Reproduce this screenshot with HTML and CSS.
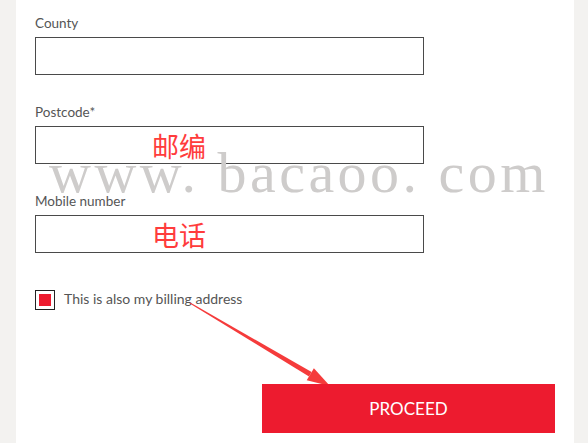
FILE: index.html
```html
<!DOCTYPE html>
<html lang="en">
<head>
<meta charset="utf-8">
<title>Address</title>
<link rel="stylesheet" href="styles.css">
</head>
<body>
<div class="page">
  <form class="form">
    <div class="field">
      <label class="label">County</label>
      <div class="box"></div>
    </div>
    <div class="field">
      <label class="label">Postcode*</label>
      <div class="box"><span class="note">邮编</span></div>
    </div>
    <div class="field">
      <label class="label">Mobile number</label>
      <div class="box"><span class="note">电话</span></div>
    </div>
    <div class="check-row">
      <span class="check"><span class="check-fill"></span></span>
      <span class="check-label">This is also my billing address</span>
    </div>
    <button type="button" class="proceed">PROCEED</button>
  </form>
  <svg class="arrow" width="588" height="443" viewBox="0 0 588 443">
    <polygon fill="#f53b3b" points="189.8,303.4 190.2,302.6 311.6,372.1 309.0,376.4"/>
    <polygon fill="#f53b3b" points="306.7,380.3 313.9,368.3 330,386"/>
  </svg>
  <div class="watermark">www. bacaoo. com</div>
</div>
</body>
</html>
```

FILE: styles.css
```css
html, body {
  margin: 0;
  padding: 0;
}
body {
  background: #f3f2f0;
  font-family: Lato, "Noto Sans", sans-serif;
  width: 588px;
  height: 443px;
  overflow: hidden;
}
.page {
  position: relative;
  margin-left: 16px;
  width: 558px;
  height: 443px;
  background: #ffffff;
  box-sizing: border-box;
  padding: 13px 19px 0;
}
.form {
  display: flex;
  flex-direction: column;
}
.field {
  display: flex;
  flex-direction: column;
  gap: 4px;
  margin-bottom: 27px;
}
.label {
  font-size: 13.5px;
  line-height: 20px;
  color: #555555;
}
.box {
  width: 389px;
  height: 38px;
  box-sizing: border-box;
  border: 1px solid #4a4a4a;
  display: flex;
  align-items: center;
  padding-left: 116px;
}
.note {
  font-family: "Noto Sans CJK SC", sans-serif;
  font-size: 27px;
  font-weight: 400;
  line-height: 1;
  color: #ff3c3c;
}
.check-row {
  display: flex;
  align-items: center;
  gap: 9px;
  margin-top: 10px;
}
.check {
  width: 20px;
  height: 20px;
  box-sizing: border-box;
  border: 1.5px solid #222222;
  display: flex;
  align-items: center;
  justify-content: center;
}
.check-fill {
  width: 12px;
  height: 12px;
  background: #ed1b2f;
}
.check-label {
  font-size: 14px;
  line-height: 16px;
  margin-top: -3px;
  color: #555555;
}
.proceed {
  position: relative;
  z-index: 2;
  align-self: flex-end;
  margin-top: 74px;
  width: 293px;
  height: 49px;
  border: none;
  background: #ed1b2f;
  color: #ffffff;
  font-family: Lato, "Noto Sans", sans-serif;
  font-size: 17px;
  padding: 0;
}
.arrow {
  position: absolute;
  left: -16px;
  top: 0;
  z-index: 1;
  pointer-events: none;
}
.watermark {
  position: absolute;
  left: 33px;
  top: 144px;
  z-index: 3;
  font-family: "Liberation Serif", serif;
  font-size: 58px;
  line-height: 1;
  letter-spacing: 3.5px;
  color: #cecccb;
  white-space: pre;
  pointer-events: none;
}
```
